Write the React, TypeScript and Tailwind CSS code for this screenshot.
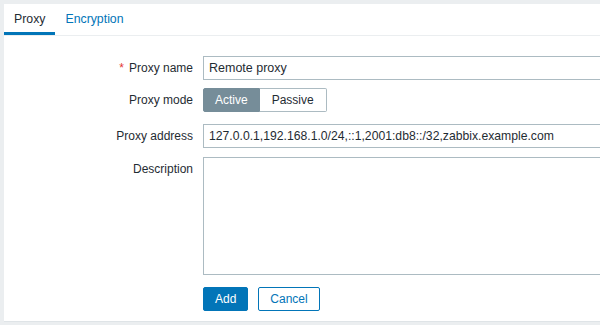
import React from "react";

const font = { fontFamily: '"Liberation Sans", Arial, sans-serif' };

function Label({ children, required }: { children: React.ReactNode; required?: boolean }) {
    return (
        <div className="w-[189px] shrink-0 text-right leading-[24px]">
            {required && <span className="text-[#e33734] mr-[5px]">*</span>}
            {children}
        </div>
    );
}

export default function App() {
    return (
        <div
            className="w-[600px] h-[325px] overflow-hidden bg-[#ebeef0] pl-1 pt-1 text-[12px] text-[#1f2c33]"
            style={font}
        >
            <div className="h-[318px] bg-white border-b border-[#dfe4e7]">
                {/* tabs */}
                <div className="flex h-[32px] border-b border-[#ebeef0]">
                    <div className="h-[31px] px-[10px] pt-[2px] flex items-center border-b-[3px] border-[#0275b8] text-[12.3px] text-[#1f2c33]">
                        Proxy
                    </div>
                    <div className="h-[31px] px-[10px] pt-[2px] flex items-center border-b-[3px] border-transparent text-[12.3px] text-[#0275b8]">
                        Encryption
                    </div>
                </div>

                {/* form */}
                <div className="flex flex-col pt-[20px]">
                    <div className="flex gap-[10px]">
                        <Label required>Proxy name</Label>
                        <div className="w-[453px] h-[24px] shrink-0 border border-[#acbbc2] px-[5px] leading-[22px] text-[12.5px]">
                            Remote proxy
                        </div>
                    </div>

                    <div className="flex gap-[10px] mt-[8px]">
                        <Label>Proxy mode</Label>
                        <div className="flex h-[24px]">
                            <div className="px-[11px] bg-[#768d99] border border-[#768d99] text-white leading-[22px] rounded-l-[2px]">
                                Active
                            </div>
                            <div className="px-[12px] border border-l-0 border-[#acbbc2] leading-[22px] rounded-r-[2px]">
                                Passive
                            </div>
                        </div>
                    </div>

                    <div className="flex gap-[10px] mt-[12px]">
                        <Label>Proxy address</Label>
                        <div className="w-[453px] h-[24px] shrink-0 border border-[#acbbc2] px-[5px] leading-[22px] text-[12.2px] whitespace-nowrap">
                            127.0.0.1,192.168.1.0/24,::1,2001:db8::/32,zabbix.example.com
                        </div>
                    </div>

                    <div className="flex gap-[10px] mt-[9px]">
                        <Label>Description</Label>
                        <div className="w-[453px] h-[118px] shrink-0 border border-[#acbbc2]" />
                    </div>

                    <div className="flex gap-[10px] mt-[12px]">
                        <div className="w-[189px] shrink-0" />
                        <div className="flex gap-[10px]">
                            <button className="h-[24px] px-[11px] bg-[#0275b8] border border-[#0275b8] text-white rounded-[2px] leading-[22px]">
                                Add
                            </button>
                            <button className="h-[24px] px-[11px] bg-white border border-[#0275b8] text-[#0275b8] rounded-[2px] leading-[22px]">
                                Cancel
                            </button>
                        </div>
                    </div>
                </div>
            </div>
        </div>
    );
}
